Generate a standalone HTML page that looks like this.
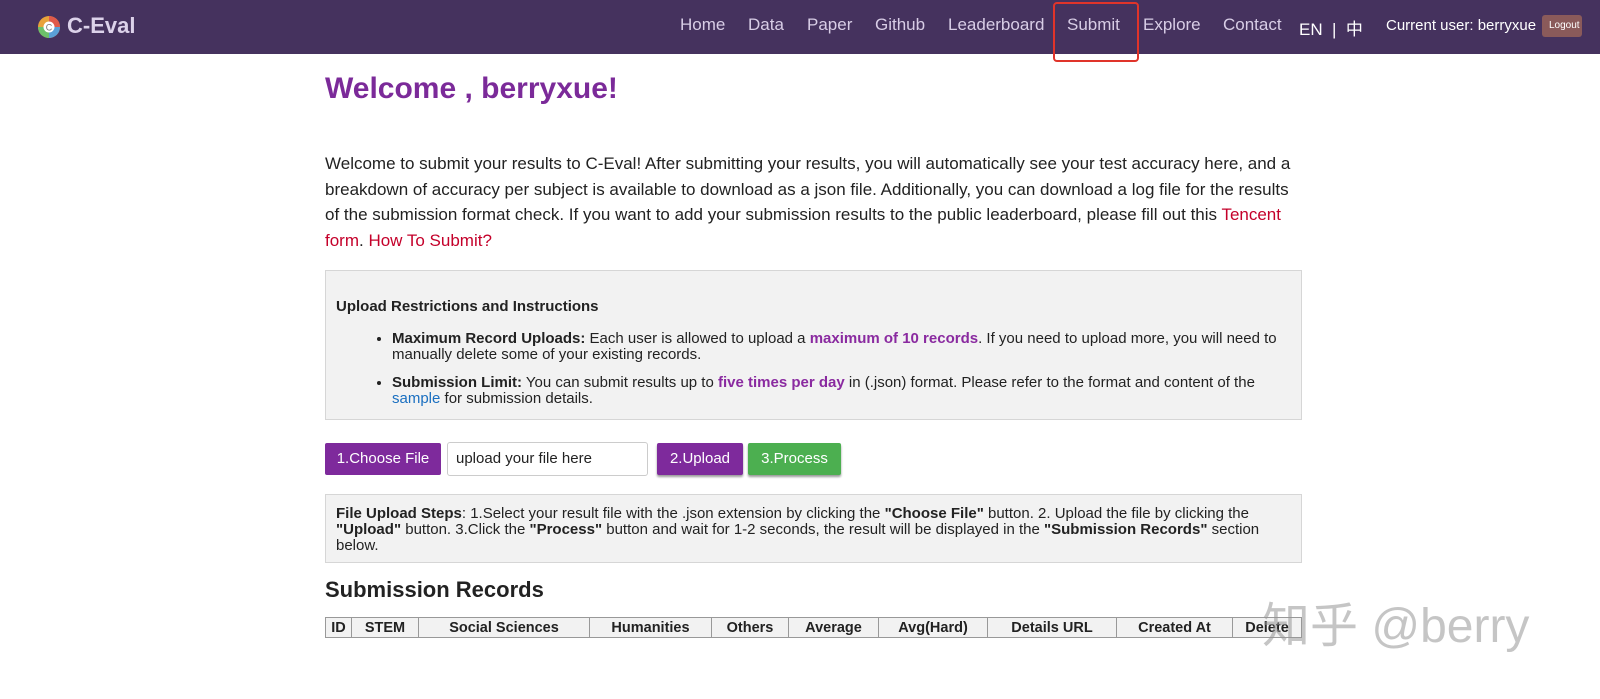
<!DOCTYPE html>
<html><head><meta charset="utf-8"><style>
*{box-sizing:border-box;margin:0;padding:0}
body{width:1600px;height:699px;overflow:hidden;background:#fff;font-family:"Liberation Sans","Noto Sans CJK SC",sans-serif;color:#222;position:relative}
.nav{position:absolute;left:0;top:0;width:1600px;height:54px;background:#45325e}
.nav span{position:absolute;top:15px;font-size:17px;color:#d8cde6}
.a{position:absolute}
p.t{position:absolute;left:325px;top:151px;width:975px;font-size:17px;line-height:25.5px;color:#222}
.red{color:#c4002a}
.box{position:absolute;left:325px;background:#f2f2f2;border:1px solid #d6d6d6}
.pur{color:#8a2aa0;font-weight:bold}
.btn{position:absolute;top:443px;height:32px;color:#fff;font-size:15px;line-height:32px;text-align:center;border-radius:2px}
table{position:absolute;left:325px;top:617px;width:977px;border-collapse:collapse;font-size:14.5px;font-weight:bold;background:#f2f2f2}
td{border:1px solid #999;height:20px;text-align:center;padding:0}
</style></head><body>
<div class="nav">
<svg class="a" style="left:37px;top:15px" width="24" height="24" viewBox="0 0 24 24"><circle cx="12" cy="12" r="11" fill="#e8a23a"/><path d="M12 1A11 11 0 0 1 23 12H12z" fill="#e05a4a"/><path d="M23 12A11 11 0 0 1 12 23V12z" fill="#5aa0d8"/><path d="M12 23A11 11 0 0 1 1 12H12z" fill="#6cc06a"/><circle cx="12" cy="12" r="5.5" fill="#fff"/><text x="12" y="15.5" font-size="9" text-anchor="middle" fill="#777" font-family="Liberation Sans">C</text></svg>
<span style="left:67px;top:13px;font-size:22px;font-weight:bold;color:#dcd2ea">C-Eval</span>
<span style="left:680px">Home</span><span style="left:748px">Data</span><span style="left:807px">Paper</span><span style="left:875px">Github</span><span style="left:948px">Leaderboard</span><span style="left:1067px">Submit</span><span style="left:1143px">Explore</span><span style="left:1223px">Contact</span>
<span style="left:1299px;color:#fff">EN &nbsp;| &nbsp;中</span>
<span style="left:1386px;top:17px;font-size:15px;color:#fff">Current user: berryxue</span>
<div class="a" style="left:1542px;top:15px;width:40px;height:22px;background:#8a5a5a;border-radius:3px;color:#fff;font-size:10px;line-height:22px;padding-left:7px">Logout</div>
</div>
<div class="a" style="left:1053px;top:2px;width:86px;height:60px;border:2px solid #e0342a;border-radius:4px"></div>
<div class="a" style="left:325px;top:72px;font-size:30px;font-weight:bold;color:#7b2a99">Welcome , berryxue!</div>
<p class="t">Welcome to submit your results to C-Eval! After submitting your results, you will automatically see your test accuracy here, and a breakdown of accuracy per subject is available to download as a json file. Additionally, you can download a log file for the results of the submission format check. If you want to add your submission results to the public leaderboard, please fill out this <span class="red">Tencent form</span>. <span class="red">How To Submit?</span></p>
<div class="box" style="top:270px;width:977px;height:150px;font-size:15px;line-height:16px">
<div class="a" style="left:10px;top:28px;font-weight:bold;font-size:15px">Upload Restrictions and Instructions</div>
<ul class="a" style="left:66px;top:60px;width:900px">
<li style="margin-bottom:12px"><b>Maximum Record Uploads:</b> Each user is allowed to upload a <span class="pur">maximum of 10 records</span>. If you need to upload more, you will need to manually delete some of your existing records.</li>
<li><b>Submission Limit:</b> You can submit results up to <span class="pur">five times per day</span> in (.json) format. Please refer to the format and content of the <span style="color:#1a6fc0">sample</span> for submission details.</li>
</ul></div>
<div class="btn" style="left:325px;width:116px;background:#7e2a9c">1.Choose File</div>
<div class="a" style="left:447px;top:442px;width:201px;height:34px;border:1px solid #ccc;border-radius:3px;font-size:15px;line-height:32px;padding-left:8px">upload your file here</div>
<div class="btn" style="left:657px;width:86px;background:#7e2a9c;box-shadow:0 2px 2px #999">2.Upload</div>
<div class="btn" style="left:748px;width:93px;background:#4caf50;box-shadow:0 2px 2px #999">3.Process</div>
<div class="box" style="top:494px;width:977px;height:69px;font-size:15px;line-height:16px;padding:11px 10px">
<b>File Upload Steps</b>: 1.Select your result file with the .json extension by clicking the <b>"Choose File"</b> button. 2. Upload the file by clicking the <b>"Upload"</b> button. 3.Click the <b>"Process"</b> button and wait for 1-2 seconds, the result will be displayed in the <b>"Submission Records"</b> section below.</div>
<div class="a" style="left:325px;top:577px;font-size:22px;font-weight:bold">Submission Records</div>
<table><tr><td style="width:26px">ID</td><td style="width:67px">STEM</td><td style="width:171px">Social Sciences</td><td style="width:122px">Humanities</td><td style="width:77px">Others</td><td style="width:90px">Average</td><td style="width:109px">Avg(Hard)</td><td style="width:129px">Details URL</td><td style="width:116px">Created At</td><td>Delete</td></tr></table>
<div class="a" style="left:1262px;top:586px;font-size:48px;color:rgba(150,150,150,0.55);font-family:'Liberation Sans','Noto Sans CJK SC',sans-serif">知乎 @berry</div>
</body></html>
